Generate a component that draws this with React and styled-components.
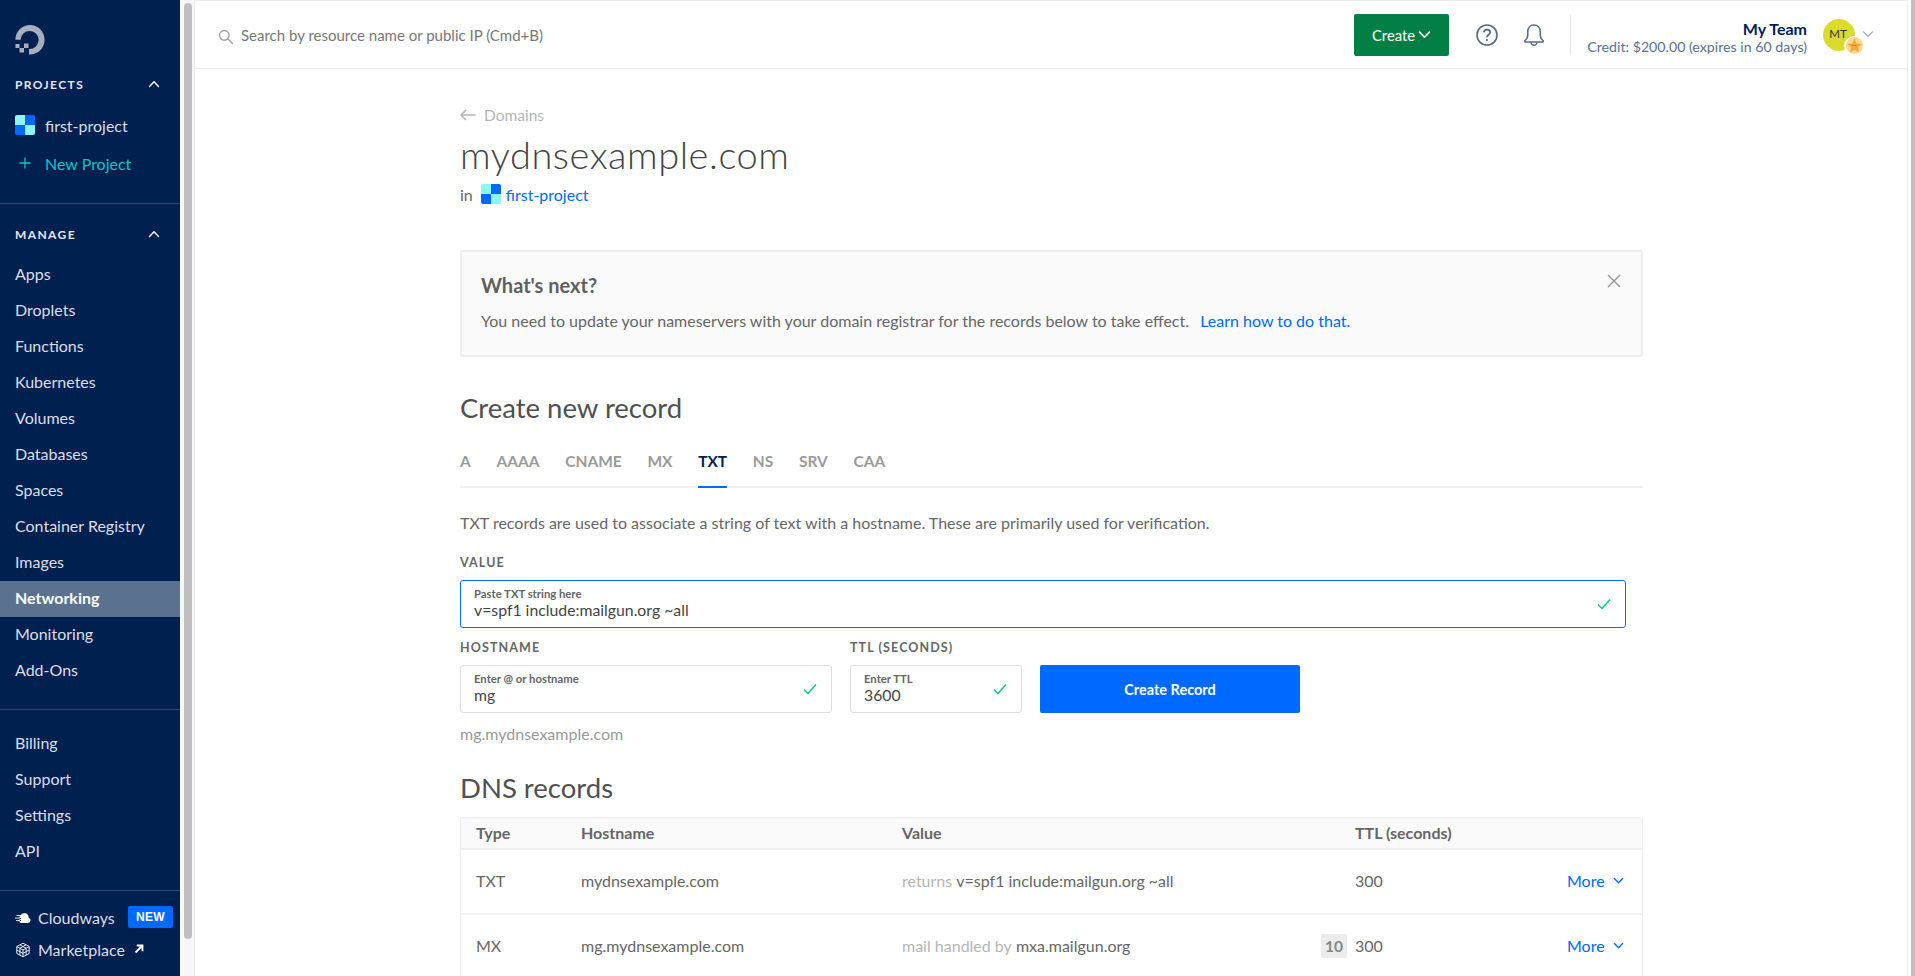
import React from "react";
import styled, { createGlobalStyle } from "styled-components";

const Global = createGlobalStyle`
  html, body { margin: 0; padding: 0; height: 976px; overflow: hidden; background: #fff; }
  body { font-family: "Lato", "Open Sans", "Liberation Sans", sans-serif; color: #444; -webkit-font-smoothing: antialiased; }
  * { box-sizing: border-box; }
`;

const Page = styled.div`display: flex; width: 1915px; height: 976px; overflow: hidden;`;

const Sidebar = styled.aside`
  width: 180px; flex: none; height: 976px; background: #002050; padding-top: 25px;
  display: flex; flex-direction: column; color: #e4e9f0;
`;
const LogoWrap = styled.div`height: 29px; margin: 0 0 21px 15px;`;
const SectionHead = styled.div`
  height: 20px; padding: 0 20px 2px 15px; margin-top: ${p => p.$mt || 0}px; display: flex; align-items: center; justify-content: space-between;
  font-size: 12px; font-weight: 700; letter-spacing: 1.4px; color: #e4e9f0;
`;
const ProjectRow = styled.div`
  height: 38px; padding: 0 0 4px 15px; display: flex; align-items: center; gap: 10px; font-size: 16px;
  color: ${p => p.$new ? "#00c6c6" : "#d9dfe8"}; margin-top: ${p => p.$mt || 0}px;
`;
const PlusSlot = styled.span`width: 20px; display: flex; justify-content: center;`;
const Divider = styled.div`height: 1px; background: #2f4a72; margin-top: ${p => p.$mt}px;`;
const NavList = styled.nav`margin-top: ${p => p.$mt}px; display: flex; flex-direction: column;`;
const NavItem = styled.a`
  height: 36px; padding: 0 0 4px 15px; display: flex; align-items: center; font-size: 16px;
  font-weight: ${p => p.$active ? 700 : 400};
  color: ${p => p.$active ? "#fff" : "#d9dfe8"};
  background: ${p => p.$active ? "#5b7190" : "transparent"};
`;
const FootRow = styled.div`
  height: 32px; padding: 0 0 4px 15px; display: flex; align-items: center; font-size: 16px; color: #d9dfe8; position: relative;
  margin-top: ${p => p.$mt || 0}px;
`;
const FootIcon = styled.span`width: 23px; flex: none; display: flex; margin-top: 2px;`;
const NewBadge = styled.span`
  position: absolute; left: 128px; top: 3px; width: 45px; height: 22px; border-radius: 2px; background: #0069ff;
  color: #fff; font-size: 12px; font-weight: 700; display: flex; align-items: center; justify-content: center; letter-spacing: .3px;
  font-family: "Liberation Sans", sans-serif;
`;
const Gutter = styled.div`width: 14px; flex: none; background: #f7f7f7; padding: 3px 0 0 4px;`;
const Thumb = styled.div`width: 8px; height: 936px; background: #bfbfbf; border-radius: 4px;`;

const Main = styled.main`
  flex: 1; min-width: 0; height: 976px; border-left: 1px solid #ececec; border-right: 1px solid #ececec; display: flex; flex-direction: column;
`;
const RightGutter = styled.div`width: 7px; flex: none; padding-left: 3px; background: #fff;`;
const RightThumb = styled.div`width: 4px; height: 976px; background: #bfbfbf;`;
const Header = styled.header`
  height: 69px; flex: none; border-top: 1px solid #ececec; border-bottom: 1px solid #ececec; display: flex; align-items: center; padding-left: 23px;
`;
const SearchText = styled.span`margin-left: 7px; font-size: 15px; color: #777; flex: 1;`;
const CreateBtn = styled.button`
  width: 95px; height: 42px; border: 0; border-radius: 2px; background: #037f46; color: #fff; font: 400 14.8px "Lato", sans-serif;
  display: flex; align-items: center; justify-content: center; gap: 3px; padding: 0;
`;
const HeadIcon = styled.span`display: flex; margin-left: ${p => p.$ml}px;`;
const VRule = styled.div`width: 1px; height: 39px; background: #e5e5e5; margin-left: 24px;`;
const Team = styled.div`margin-left: 12px; width: 224px; text-align: right; line-height: 18px; padding-top: 6px;`;
const TeamName = styled.div`font-size: 16px; font-weight: 700; color: #002050;`;
const TeamCredit = styled.div`font-size: 14.2px; color: #5b6f8f;`;
const AvatarBox = styled.div`position: relative; width: 32px; height: 32px; margin-left: 16px;`;
const Avatar = styled.div`
  width: 32px; height: 32px; border-radius: 50%; background: #d9dc2e; color: #333; font-size: 11.5px; display: flex; align-items: center; justify-content: center;
  padding: 0 2px 2px 0;
`;
const AvatarBadge = styled.div`
  position: absolute; right: -9px; bottom: -5px; width: 20px; height: 20px; border-radius: 50%; background: #fff; display: flex; align-items: center; justify-content: center;
`;
const AvatarChevron = styled.span`display: flex; margin: -2px 33px 0 7px;`;

const Content = styled.div`
  width: 1183px; margin-left: 265px; display: flex; flex-direction: column;
`;
const Back = styled.div`display: flex; align-items: center; height: 20px; margin-top: 36px; gap: 8px; font-size: 15.5px; color: #b5b5b5;`;
const Title = styled.h1`margin: 7px 0 2px; font-size: 38px; line-height: 44px; font-weight: 300; color: #444; letter-spacing: .55px;`;
const InRow = styled.div`display: flex; align-items: center; height: 20px; margin-top: 6px; font-size: 16px; color: #666;`;
const InLink = styled.a`color: #0069ff; margin-left: 5px;`;
const InIconSlot = styled.span`display: flex; margin-left: 8px;`;
const NextBox = styled.section`
  margin-top: 46px; height: 107px; background: #fafafa; border: 2px solid #eee; border-radius: 3px; padding: 20px 19px; position: relative;
`;
const NextTitle = styled.h3`margin: 0; font-size: 20px; line-height: 26px; font-weight: 700; color: #5f5f5f;`;
const NextText = styled.p`margin: 12px 0 0; font-size: 16px; line-height: 22px; color: #666;`;
const NextLink = styled.a`color: #0069ff; margin-left: 7px;`;
const CloseBtn = styled.span`position: absolute; right: 20px; top: 22px; display: flex;`;
const H2 = styled.h2`margin: ${p => p.$mt}px 0 0; font-size: 27.5px; line-height: 34px; font-weight: 400; color: #505050;`;
const Tabs = styled.div`display: flex; height: 48px; margin-top: 15px; border-bottom: 2px solid #f1f1f1; gap: 25.7px;`;
const Tab = styled.div`
  height: 48px; padding-top: 11px; font-size: 15.5px; line-height: 20px; font-weight: 700;
  color: ${p => p.$active ? "#002050" : "#9a9a9a"};
  border-bottom: 2px solid ${p => p.$active ? "#0069ff" : "transparent"};
`;
const Desc = styled.p`margin: 25px 0 0; font-size: 16px; line-height: 20px; color: #666;`;
const FieldLabel = styled.div`height: 18px; font-size: 12.5px; line-height: 22px; font-weight: 700; color: #666; letter-spacing: 1.1px;`;
const ValueLabel = styled(FieldLabel)`margin-top: 19px;`;
const InputBox = styled.div`
  width: ${p => p.$w}; height: 48px; margin-top: 10px; border: 1px solid ${p => p.$focus ? "#0069ff" : "#ddd"}; border-radius: 3px;
  padding: 6px 13px 0; position: relative; background: #fff;
`;
const InputLabel = styled.div`font-size: 11.3px; line-height: 14px; font-weight: 700; color: #666;`;
const InputValue = styled.div`font-size: 15.8px; line-height: 20px; color: #444; margin-top: -1px;`;
const Check = styled.span`position: absolute; right: 14px; top: 17px; display: flex;`;
const FormRow = styled.div`display: flex; margin-top: 9px; gap: 18px; align-items: flex-end;`;
const FieldCol = styled.div`width: ${p => p.$w}px; flex: none;`;
const CreateRecord = styled.button`
  width: 260px; height: 48px; border: 0; border-radius: 2px; background: #0069ff; color: #fff; font: 700 14.5px "Lato", sans-serif; flex: none;
`;
const Helper = styled.div`margin-top: 11px; font-size: 16px; line-height: 20px; color: #999;`;
const Table = styled.div`margin-top: 12px; border: 1px solid #eee; border-radius: 3px 3px 0 0; margin-bottom: -200px;`;
const Row = styled.div`
  display: grid; grid-template-columns: 105px 321px 453px 212px 1fr; align-items: center; padding: 0 0 2px 15px;
  height: ${p => p.$head ? 32 : 65}px; border-bottom: 2px solid #f1f1f1;
  background: ${p => p.$head ? "#fafafa" : "#fff"};
  font-size: 16px; font-weight: ${p => p.$head ? 700 : 400}; color: #666;
`;
const ValueCell = styled.div`display: flex; align-items: center; padding-right: 8px;`;
const Muted = styled.span`color: #b5b5b5; margin-right: 4px;`;
const Priority = styled.span`
  margin-left: auto; width: 26px; height: 24px; background: #ececec; border-radius: 2px; color: #888; font-weight: 700; font-size: 15.5px; display: flex; align-items: center; justify-content: center;
`;
const More = styled.a`color: #0069ff; display: flex; align-items: center; gap: 8px;`;

const Chevron = ({ up, color = "#fff", size = 12, width = 1.4 }) => (
  <svg width={size} height={size} viewBox="0 0 12 12" fill="none" stroke={color} strokeWidth={width} strokeLinecap="round" strokeLinejoin="round">
    <path d={up ? "M1.5 8.5 6 3.8l4.5 4.7" : "M1.5 3.8 6 8.5l4.5-4.7"} />
  </svg>
);
const Logo = () => (
  <svg width="30" height="30" viewBox="0 0 30 30" fill="#a5afbe" style={{ display: "block" }}>
    <path d="M14 29.5v-5.6a9 9 0 1 0-8.400-9.100H.4C.4 6.700 7 0 15 0c8.100 0 14.600 6.600 14.600 14.800S23.100 29.500 15 29.500Z" />
    <rect x="9" y="18.500" width="4.500" height="4.500" />
    <rect x="4.500" y="23" width="4.500" height="4.500" />
    <rect x=".5" y="19" width="4" height="4" />
  </svg>
);
const ProjectIcon = () => (
  <svg width="20" height="20" viewBox="0 0 20 20" style={{ display: "block" }}>
    <defs><clipPath id="pi"><rect width="20" height="20" rx="2" /></clipPath></defs>
    <g clipPath="url(#pi)">
      <rect width="10" height="10" fill="#8ff5f0" /><rect x="10" width="10" height="10" fill="#0069ff" />
      <rect y="10" width="10" height="10" fill="#0069ff" /><rect x="10" y="10" width="10" height="10" fill="#8ff5f0" />
    </g>
  </svg>
);
const Plus = () => (
  <svg width="12" height="12" viewBox="0 0 12 12" stroke="#00c6c6" strokeWidth="1.300"><path d="M6 .5v11M.5 6h11" /></svg>
);
const Cloud = () => (
  <svg width="16" height="11" viewBox="0 0 16 11" fill="#fff">
    <path d="M5 10h8a2.700 2.700 0 0 0 .6-5.300A4.300 4.300 0 0 0 5.500 2.500 2.800 2.800 0 0 0 4.500 5H6v1H4.500v1H6v1H4.500v1H5Z" />
    <rect x="1.500" y="2" width="5" height=".9" />
    <rect x="0" y="4.600" width="5" height=".9" />
    <rect x="1" y="7.200" width="4" height=".9" />
  </svg>
);
const Cube = () => (
  <svg width="16" height="16" viewBox="0 0 16 16" fill="none" stroke="#e8ecf2" strokeWidth="1">
    <path d="M8 1.200 14.200 4.500v7L8 14.800 1.800 11.500v-7ZM1.800 4.500 8 8l6.200-3.500M8 8v6.800M4.900 2.900l6.200 3.300M11.100 2.900 4.900 6.200M1.800 8 8 11.400 14.200 8M4.900 6.300V13M11.100 6.300V13" />
  </svg>
);
const ExtArrow = () => (
  <svg width="10" height="10" viewBox="0 0 10 10" fill="none" stroke="#fff" strokeWidth="1.800" style={{ marginLeft: 9 }}>
    <path d="M1.500 8.500 8 2M2.800 1.500H8.500V7.200" />
  </svg>
);
const SearchIcon = () => (
  <svg width="16" height="16" viewBox="0 0 16 16" fill="none" stroke="#999" strokeWidth="1.300" style={{ marginTop: 4 }}>
    <circle cx="6.300" cy="6.300" r="4.800" /><path d="m9.800 9.800 5 5" />
  </svg>
);
const HelpIcon = () => (
  <svg width="24" height="24" viewBox="0 0 24 24" fill="none" stroke="#53688a" strokeWidth="1.600">
    <circle cx="12" cy="12" r="10" />
    <path d="M8.900 9.300C9 7.500 10.300 6.600 12 6.600c1.800 0 3.100 1 3.100 2.600 0 2.600-3.100 2.500-3.100 5" strokeWidth="1.800" />
    <circle cx="12" cy="17" r="1.100" fill="#53688a" stroke="none" />
  </svg>
);
const BellIcon = () => (
  <svg width="24" height="26" viewBox="0 0 24 26" fill="none" stroke="#53688a" strokeWidth="1.500" strokeLinejoin="round">
    <path d="M3 18.500c2-1.500 2.800-3 2.800-6V9.500C5.800 5.600 8.400 3 12 3s6.200 2.600 6.200 6.500v3c0 3 .8 4.500 2.800 6 .6.500.3 1.500-.5 1.500h-17c-.8 0-1.100-1-.5-1.500Z" />
    <path d="M9 20.500c.3 1.800 1.400 2.800 3 2.800s2.700-1 3-2.800" />
  </svg>
);
const StarBadge = () => (
  <svg width="17" height="17" viewBox="0 0 16 16">
    <circle cx="8" cy="8" r="8" fill="#fcd98a" />
    <path d="M8 1 9.900 6l5 .5-3.800 3.200 1.100 5L8 12l-4.200 2.700 1.100-5L1.100 6.500l5-.5Z" fill="#f0a93a" />
    <circle cx="6.700" cy="7.800" r=".6" fill="#8a6a2a" /><circle cx="9.300" cy="7.800" r=".6" fill="#8a6a2a" />
  </svg>
);
const BackArrow = () => (
  <svg width="16" height="12" viewBox="0 0 16 12" fill="none" stroke="#b5b5b5" strokeWidth="1.500"><path d="M15.500 6H1M6 1 1 6l5 5" /></svg>
);
const CloseIcon = () => (
  <svg width="14" height="14" viewBox="0 0 14 14" stroke="#909090" strokeWidth="1.300"><path d="M1 1l12 12M13 1 1 13" /></svg>
);
const CheckIcon = () => (
  <svg width="14" height="12" viewBox="0 0 14 12" fill="none" stroke="#10c77e" strokeWidth="1.500"><path d="M1 6.500 5 10.500 13 1.500" /></svg>
);

const manage = ["Apps", "Droplets", "Functions", "Kubernetes", "Volumes", "Databases", "Spaces", "Container Registry", "Images", "Networking", "Monitoring", "Add-Ons"];
const account = ["Billing", "Support", "Settings", "API"];
const tabs = ["A", "AAAA", "CNAME", "MX", "TXT", "NS", "SRV", "CAA"];

export default function App() {
  return (
    <Page>
      <Global />
      <Sidebar>
        <LogoWrap><Logo /></LogoWrap>
        <SectionHead>PROJECTS <Chevron up /></SectionHead>
        <ProjectRow $mt={13}><ProjectIcon />first-project</ProjectRow>
        <ProjectRow $new><PlusSlot><Plus /></PlusSlot>New Project</ProjectRow>
        <Divider $mt={19} />
        <SectionHead $mt={21}>MANAGE <Chevron up /></SectionHead>
        <NavList $mt={12}>
          {manage.map(m => <NavItem key={m} $active={m === "Networking"}>{m}</NavItem>)}
        </NavList>
        <Divider $mt={20} />
        <NavList $mt={16}>
          {account.map(m => <NavItem key={m}>{m}</NavItem>)}
        </NavList>
        <Divider $mt={20} />
        <FootRow $mt={12}><FootIcon><Cloud /></FootIcon>Cloudways<NewBadge>NEW</NewBadge></FootRow>
        <FootRow><FootIcon><Cube /></FootIcon>Marketplace<ExtArrow /></FootRow>
      </Sidebar>
      <Gutter><Thumb /></Gutter>
      <Main>
        <Header>
          <SearchIcon />
          <SearchText>Search by resource name or public IP (Cmd+B)</SearchText>
          <CreateBtn>Create <Chevron size={13} /></CreateBtn>
          <HeadIcon $ml={26}><HelpIcon /></HeadIcon>
          <HeadIcon $ml={23}><BellIcon /></HeadIcon>
          <VRule />
          <Team>
            <TeamName>My Team</TeamName>
            <TeamCredit>Credit: $200.00 (expires in 60 days)</TeamCredit>
          </Team>
          <AvatarBox>
            <Avatar>MT</Avatar>
            <AvatarBadge><StarBadge /></AvatarBadge>
          </AvatarBox>
          <AvatarChevron><Chevron color="#9aa7ba" size={12} width={1.1} /></AvatarChevron>
        </Header>
        <Content>
          <Back><BackArrow />Domains</Back>
          <Title>mydnsexample.com</Title>
          <InRow>in<InIconSlot><ProjectIcon /></InIconSlot><InLink>first-project</InLink></InRow>
          <NextBox>
            <NextTitle>What's next?</NextTitle>
            <NextText>You need to update your nameservers with your domain registrar for the records below to take effect. <NextLink>Learn how to do that.</NextLink></NextText>
            <CloseBtn><CloseIcon /></CloseBtn>
          </NextBox>
          <H2 $mt={34}>Create new record</H2>
          <Tabs>{tabs.map(t => <Tab key={t} $active={t === "TXT"}>{t}</Tab>)}</Tabs>
          <Desc>TXT records are used to associate a string of text with a hostname. These are primarily used for verification.</Desc>
          <ValueLabel>VALUE</ValueLabel>
          <InputBox $focus $w="1166px">
            <InputLabel>Paste TXT string here</InputLabel>
            <InputValue>v=spf1 include:mailgun.org ~all</InputValue>
            <Check><CheckIcon /></Check>
          </InputBox>
          <FormRow>
            <FieldCol $w={372}>
              <FieldLabel>HOSTNAME</FieldLabel>
              <InputBox $w="100%">
                <InputLabel>Enter @ or hostname</InputLabel>
                <InputValue>mg</InputValue>
                <Check><CheckIcon /></Check>
              </InputBox>
            </FieldCol>
            <FieldCol $w={172}>
              <FieldLabel>TTL (SECONDS)</FieldLabel>
              <InputBox $w="100%">
                <InputLabel>Enter TTL</InputLabel>
                <InputValue>3600</InputValue>
                <Check><CheckIcon /></Check>
              </InputBox>
            </FieldCol>
            <CreateRecord>Create Record</CreateRecord>
          </FormRow>
          <Helper>mg.mydnsexample.com</Helper>
          <H2 $mt={27}>DNS records</H2>
          <Table>
            <Row $head><div>Type</div><div>Hostname</div><div>Value</div><div>TTL (seconds)</div><div /></Row>
            <Row>
              <div>TXT</div><div>mydnsexample.com</div>
              <ValueCell><Muted>returns</Muted>v=spf1 include:mailgun.org ~all</ValueCell>
              <div>300</div><More>More <Chevron color="#0069ff" size={11} /></More>
            </Row>
            <Row>
              <div>MX</div><div>mg.mydnsexample.com</div>
              <ValueCell><Muted>mail handled by</Muted>mxa.mailgun.org<Priority>10</Priority></ValueCell>
              <div>300</div><More>More <Chevron color="#0069ff" size={11} /></More>
            </Row>
          </Table>
        </Content>
      </Main>
      <RightGutter><RightThumb /></RightGutter>
    </Page>
  );
}
